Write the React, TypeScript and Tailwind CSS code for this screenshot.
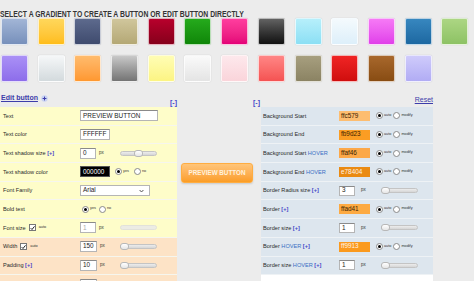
const ROW1 = [
  'bg-linear-to-b from-[#a2b5d6] to-[#7790bb]',
  'bg-linear-to-b from-[#ffd75a] to-[#ffbd18]',
  'bg-linear-to-b from-[#5d6a8d] to-[#3f4b6e]',
  'bg-linear-to-b from-[#d0c69c] to-[#b4a875]',
  'bg-linear-to-b from-[#b8002c] to-[#86001b]',
  'bg-linear-to-b from-[#25aa1c] to-[#0f8608]',
  'bg-linear-to-b from-[#ff3d9e] to-[#e40078]',
  'bg-linear-to-b from-[#626262] to-[#121212]',
  'bg-linear-to-b from-[#b6effb] to-[#8bdff4]',
  'bg-linear-to-b from-[#f4fafd] to-[#ddeffa]',
  'bg-linear-to-b from-[#f679f6] to-[#e03ee9]',
  'bg-linear-to-b from-[#3787bf] to-[#1d68a1]',
  'bg-linear-to-b from-[#acd683] to-[#8dc264]',
];

const ROW2 = [
  'bg-linear-to-b from-[#aa90f6] to-[#8d6dea]',
  'bg-linear-to-b from-[#f5f7f8] to-[#d3dadd]',
  'bg-linear-to-b from-[#ffbb6c] to-[#ff982f]',
  'bg-linear-to-b from-[#c8c8c8] to-[#747474]',
  'bg-linear-to-b from-[#fffdb4] to-[#fcf482]',
  'bg-linear-to-b from-[#fafafa] to-[#e4e4e4]',
  'bg-linear-to-b from-[#fde8ec] to-[#fad4da]',
  'bg-linear-to-b from-[#ff8585] to-[#f45252]',
  'bg-linear-to-b from-[#a79f7f] to-[#8b8363]',
  'bg-linear-to-b from-[#f02424] to-[#cf0d0d]',
  'bg-linear-to-b from-[#a8682c] to-[#884c12]',
  'bg-linear-to-b from-[#cfcbfb] to-[#b1acf4]',
];

function Swatch({ cls }: { cls: string }) {
  return <div className={`w-[27px] h-[27px] shrink-0 rounded-[2px] border border-white/70 shadow-[0_0_1px_rgba(0,0,0,0.25)] ${cls}`} />;
}

function Plus() {
  return <span className="text-[#4747c8] font-bold">[+]</span>;
}

function Hover() {
  return <span className="text-[#3a6fc4]">HOVER</span>;
}

function Radio({ on }: { on?: boolean }) {
  return (
    <span className="w-[7px] h-[7px] rounded-full border border-[#8a8a8a] bg-white flex items-center justify-center shrink-0">
      {on && <span className="w-[3px] h-[3px] rounded-full bg-black" />}
    </span>
  );
}

function Check() {
  return (
    <span className="w-[7px] h-[7px] border border-[#777] bg-white flex items-center justify-center shrink-0">
      <svg width="6" height="6" viewBox="0 0 6 6">
        <path d="M0.8 3.2 L2.4 4.8 L5.4 1" fill="none" stroke="#222" strokeWidth="1.2" />
      </svg>
    </span>
  );
}

function Slider({ thumb, disabled }: { thumb: 'left' | 'mid'; disabled?: boolean }) {
  return (
    <div
      className={`relative ml-auto mr-[20px] w-[37px] h-[5px] rounded-full border ${
        disabled ? 'border-[#e2e2da] bg-[#ecece4]' : 'border-[#c4c4c4] bg-linear-to-b from-[#ececec] to-[#d6d6d6]'
      }`}
    >
      {!disabled && (
        <div
          className={`absolute top-[-2px] w-[9px] h-[7px] rounded-[3px] border border-[#b8b8b8] bg-linear-to-b from-white to-[#e6e6e6] ${
            thumb === 'left' ? 'left-[-1px]' : 'left-[13px]'
          }`}
        />
      )}
    </div>
  );
}

function Field({ w, children, dark, dim }: { w: string; children: React.ReactNode; dark?: boolean; dim?: boolean }) {
  return (
    <div
      className={`${w} h-[11px] border flex items-center px-[2px] text-[6.4px] leading-none ${
        dark ? 'bg-black border-[#555] text-white' : 'bg-white border-[#b5b5b5] border-t-[#8a8a8a]'
      } ${dim ? 'text-[#aaa]' : dark ? '' : 'text-[#222]'}`}
    >
      {children}
    </div>
  );
}

function Px() {
  return <span className="ml-[3px] text-[4.5px] text-[#333]">px</span>;
}

function LRow({ label, children, peach }: { label: React.ReactNode; children?: React.ReactNode; peach?: boolean }) {
  return (
    <div className={`flex items-center h-[17.7px] shrink-0 ${peach ? 'bg-[#fde3c6]' : 'bg-[#fefdc9]'}`}>
      <div className="w-[80px] pl-[3px] shrink-0 flex items-center gap-[3px] text-[5.6px] text-[#2a2a2a] whitespace-nowrap">{label}</div>
      <div className="flex-1 flex items-center">{children}</div>
    </div>
  );
}

function RRow({ label, children, white }: { label: React.ReactNode; children?: React.ReactNode; white?: boolean }) {
  return (
    <div className={`flex items-center h-[17.7px] shrink-0 ${white ? 'bg-white' : 'bg-[#dde6ee]'}`}>
      <div className="w-[78px] pl-[2px] shrink-0 text-[5.6px] text-[#2a2a2a] whitespace-nowrap">{label}</div>
      <div className="flex-1 flex items-center">{children}</div>
    </div>
  );
}

function ColorIn({ value, bg, light }: { value: string; bg: string; light?: boolean }) {
  return (
    <div className="flex items-center">
      <div
        className={`w-[31px] h-[10px] flex items-center px-[2px] text-[6.4px] leading-none ${bg} ${
          light ? 'text-[#fff4e4]' : 'text-[#3a2200]'
        }`}
      >
        {value}
      </div>
      <span className="ml-[6px] flex items-center">
        <Radio on />
        <span className="ml-[1px] text-[3.8px] text-[#333]">auto</span>
        <span className="ml-[2px]">
          <Radio />
        </span>
        <span className="ml-[1px] text-[3.8px] text-[#333]">modify</span>
      </span>
    </div>
  );
}

function NumIn({ value }: { value: string }) {
  return (
    <>
      <div className="w-[16px] h-[10px] bg-white border border-[#b5b5b5] border-t-[#8a8a8a] flex items-center px-[2px] text-[6.4px] leading-none text-[#222]">
        {value}
      </div>
      <span className="ml-[6px] text-[4.5px] text-[#333]">px</span>
      <div className="relative ml-[15px] w-[37px] h-[5px] rounded-full border border-[#c4c4c4] bg-linear-to-b from-[#ececec] to-[#d6d6d6]">
        <div className="absolute top-[-2px] left-[-1px] w-[9px] h-[7px] rounded-[3px] border border-[#b8b8b8] bg-linear-to-b from-white to-[#e6e6e6]" />
      </div>
    </>
  );
}

export default function App() {
  return (
    <div className="w-[474px] h-[281px] overflow-hidden bg-[#ececec] font-['Liberation_Sans',Arial,sans-serif]">
      <div className="h-[9px] whitespace-nowrap">
        <span className="inline-block origin-left scale-x-[0.76] text-[9px] leading-[9px] font-bold text-[#353535] uppercase">
          Select a gradient to create a button or edit button directly
        </span>
      </div>

      <div className="mt-[9px] pl-[1px] flex flex-col gap-[10px]">
        <div className="flex gap-[9.7px]">
          {ROW1.map((c, i) => (
            <Swatch key={i} cls={c} />
          ))}
        </div>
        <div className="flex gap-[9.7px]">
          {ROW2.map((c, i) => (
            <Swatch key={i} cls={c} />
          ))}
        </div>
      </div>

      <div className="mt-[11px] flex">
        {/* edit panel */}
        <div className="w-[177px] shrink-0 flex flex-col">
          <div className="h-[14px] flex justify-between">
            <div className="flex items-start gap-[3px] pt-[1px] pl-[1px]">
              <span className="text-[7px] leading-[8px] font-bold text-[#3d3daa] underline">Edit button</span>
              <svg width="7" height="7" viewBox="0 0 7 7" className="mt-[1px]">
                <circle cx="3.5" cy="3.5" r="3.2" fill="#c9d3f2" />
                <path d="M3.5 1.6v3.8M1.6 3.5h3.8" stroke="#3d3daa" strokeWidth="1" />
              </svg>
            </div>
            <span className="self-end text-[7px] leading-[8px] font-bold text-[#4747c8]">[-]</span>
          </div>
          <div className="flex flex-col gap-[1px] bg-[#f6f6ee]">
            <LRow label="Text">
              <Field w="w-[78px]">PREVIEW BUTTON</Field>
            </LRow>
            <LRow label="Text color">
              <Field w="w-[30px]">FFFFFF</Field>
            </LRow>
            <LRow
              label={
                <span>
                  Text shadow size <Plus />
                </span>
              }
            >
              <Field w="w-[16px]">0</Field>
              <Px />
              <Slider thumb="mid" />
            </LRow>
            <LRow label="Text shadow color">
              <Field w="w-[30px]" dark>
                000000
              </Field>
              <span className="ml-[5px] flex items-center">
                <Radio on />
                <span className="ml-[1px] text-[3.8px] text-[#333]">yes</span>
                <span className="ml-[5px]">
                  <Radio />
                </span>
                <span className="ml-[1px] text-[3.8px] text-[#333]">no</span>
              </span>
            </LRow>
            <LRow label="Font Family">
              <div className="w-[70px] h-[11px] bg-white border border-[#b5b5b5] flex items-center justify-between px-[2px] text-[6.4px] leading-none text-[#222]">
                <span>Arial</span>
                <svg width="5" height="4" viewBox="0 0 5 4" className="mr-[3px]">
                  <path d="M0.6 1 L2.5 3 L4.4 1" fill="none" stroke="#444" strokeWidth="0.9" />
                </svg>
              </div>
            </LRow>
            <LRow label="Bold text">
              <span className="ml-[2px] flex items-center">
                <Radio on />
                <span className="ml-[1px] text-[3.8px] text-[#333]">yes</span>
                <span className="ml-[3px]">
                  <Radio />
                </span>
                <span className="ml-[1px] text-[3.8px] text-[#333]">no</span>
              </span>
            </LRow>
            <LRow
              label={
                <>
                  <span>Font size</span>
                  <Check />
                  <span className="text-[3.8px]">auto</span>
                </>
              }
            >
              <Field w="w-[16px]" dim>
                1
              </Field>
              <Px />
              <Slider thumb="left" disabled />
            </LRow>
            <LRow
              peach
              label={
                <>
                  <span>Width</span>
                  <Check />
                  <span className="text-[3.8px]">auto</span>
                </>
              }
            >
              <Field w="w-[17px]">150</Field>
              <Px />
              <Slider thumb="left" />
            </LRow>
            <LRow
              peach
              label={
                <span>
                  Padding <Plus />
                </span>
              }
            >
              <Field w="w-[17px]">10</Field>
              <Px />
              <Slider thumb="left" />
            </LRow>
            <LRow peach label="">
              <Field w="w-[17px]"> </Field>
            </LRow>
          </div>
        </div>

        {/* preview */}
        <div className="w-[76px] shrink-0 pt-[70px] pl-[4px]">
          <div className="w-[72px] h-[20px] rounded-[3px] border border-[#ffad41] bg-linear-to-b from-[#ffc579] to-[#fb9d23] shadow-[0_1px_2px_rgba(0,0,0,0.15)] flex items-center justify-center text-[6.3px] font-bold text-[#fff1dd]">
            PREVIEW BUTTON
          </div>
        </div>

        {/* style panel */}
        <div className="w-[180px] shrink-0 flex flex-col">
          <div className="h-[14px] flex justify-between">
            <span className="self-end text-[7px] leading-[8px] font-bold text-[#4747c8]">[-]</span>
            <span className="self-start mt-[3px] text-[7px] leading-[7px] text-[#3d3daa] underline">Reset</span>
          </div>
          <div className="ml-[8px] flex flex-col gap-[1px] bg-[#eef2f5]">
            <RRow label="Background Start">
              <ColorIn value="ffc579" bg="bg-[#fdbd70]" />
            </RRow>
            <RRow label="Background End">
              <ColorIn value="fb9d23" bg="bg-[#fb9d23]" />
            </RRow>
            <RRow
              label={
                <>
                  Background Start <Hover />
                </>
              }
            >
              <ColorIn value="ffaf46" bg="bg-[#fca848]" />
            </RRow>
            <RRow
              label={
                <>
                  Background End <Hover />
                </>
              }
            >
              <ColorIn value="e78404" bg="bg-[#ea8a12]" light />
            </RRow>
            <RRow
              label={
                <>
                  Border Radius size <Plus />
                </>
              }
            >
              <NumIn value="3" />
            </RRow>
            <RRow
              label={
                <>
                  Border <Plus />
                </>
              }
            >
              <ColorIn value="ffad41" bg="bg-[#fdaa42]" />
            </RRow>
            <RRow
              label={
                <>
                  Border size <Plus />
                </>
              }
            >
              <NumIn value="1" />
            </RRow>
            <RRow
              label={
                <>
                  Border <Hover /> <Plus />
                </>
              }
            >
              <ColorIn value="ff9913" bg="bg-[#fb9a1e]" light />
            </RRow>
            <RRow
              label={
                <>
                  Border size <Hover /> <Plus />
                </>
              }
            >
              <NumIn value="1" />
            </RRow>
            <RRow white label="">
              <div className="flex items-start self-start pt-[5px] ml-[43px] gap-[10px]">
                <div className="w-[10px] h-[10px] bg-[#30363f]" />
                <div className="w-[10px] h-[10px] bg-[#a9b2bc]" />
                <div className="w-[10px] h-[10px] -ml-[4px] bg-[#e3ebf3]" />
              </div>
            </RRow>
          </div>
        </div>
      </div>
    </div>
  );
}
